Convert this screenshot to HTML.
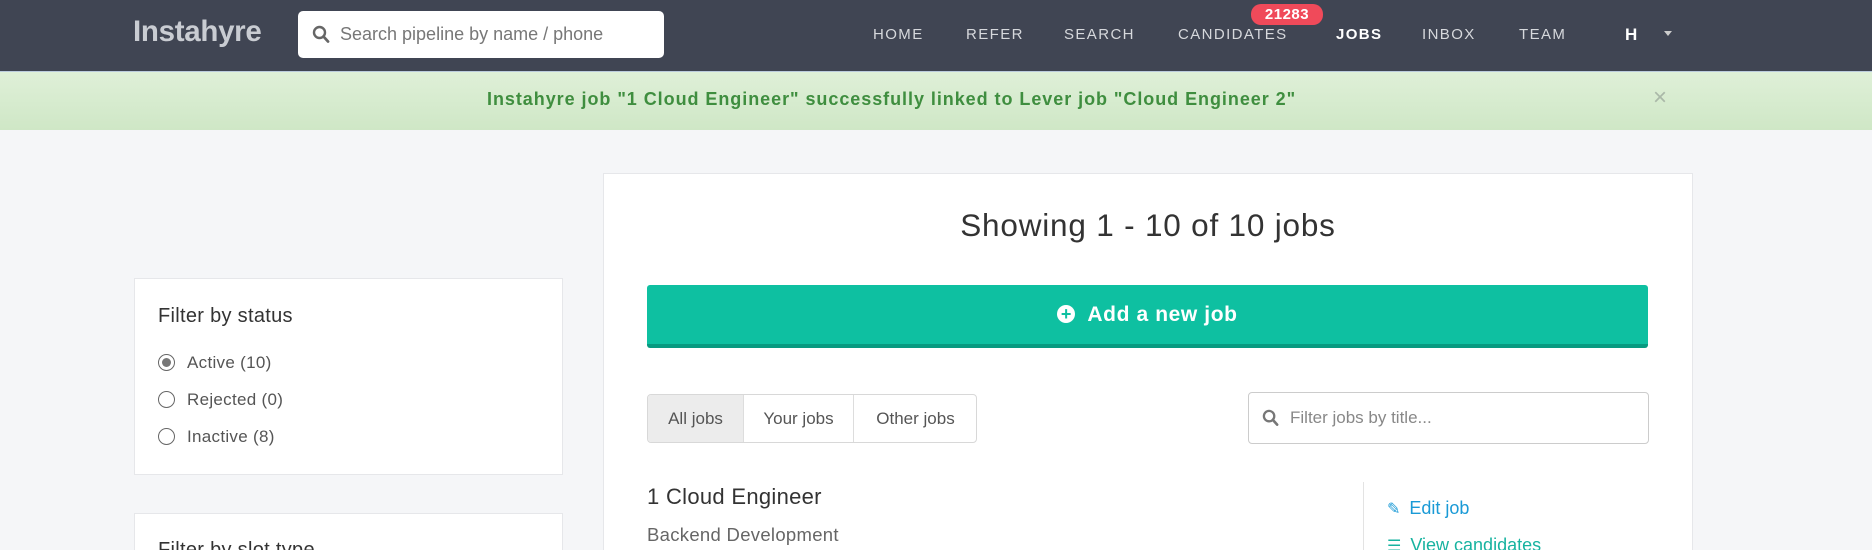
<!DOCTYPE html>
<html><head><meta charset="utf-8"><style>
*{margin:0;padding:0;box-sizing:border-box}
html,body{width:1872px;height:550px;overflow:hidden}
body{background:#f5f6f8;font-family:"Liberation Sans",sans-serif;position:relative}
.a{position:absolute;white-space:nowrap}
.nav{position:absolute;left:0;top:0;width:1872px;height:71px;background:#404553}
.ni{position:absolute;top:26px;font-size:15px;letter-spacing:1.4px;color:#d6d8dc;line-height:18px}
.banner{position:absolute;left:0;top:71px;width:1872px;height:59px;background:linear-gradient(#dff0d8,#cfe7c6);border-top:1px solid #bcd;}
.card{position:absolute;background:#fff;border:1px solid #e6e7ea}
.radio{position:absolute;width:17px;height:17px;border:1.5px solid #666;border-radius:50%;background:#fff}
.lbl{position:absolute;font-size:17px;color:#555;letter-spacing:.3px}
</style></head><body>
<div class="nav">
  <div class="a" style="left:133px;top:15px;font-size:29.5px;font-weight:bold;color:#c9ccd2;letter-spacing:-.3px">Instahyre</div>
  <div class="a" style="left:298px;top:11px;width:366px;height:47px;background:#fff;border-radius:5px">
    <svg style="position:absolute;left:14px;top:14px" width="18" height="19" viewBox="0 0 18 19"><circle cx="7.5" cy="7.5" r="5.5" fill="none" stroke="#666" stroke-width="2.4"/><path d="M11.5 11.5 L16 16.5" stroke="#666" stroke-width="2.8" stroke-linecap="round"/></svg>
    <div class="a" style="left:42px;top:13px;font-size:18px;color:#777">Search pipeline by name / phone</div>
  </div>
  <div class="ni" style="left:873px">HOME</div>
  <div class="ni" style="left:966px">REFER</div>
  <div class="ni" style="left:1064px">SEARCH</div>
  <div class="ni" style="left:1178px">CANDIDATES</div>
  <div class="a" style="left:1251px;top:4px;width:72px;height:21px;background:#f04a5a;border-radius:10px;color:#fff;font-weight:bold;font-size:15px;text-align:center;line-height:21px;letter-spacing:.5px">21283</div>
  <div class="ni" style="left:1336px;color:#fff;font-weight:bold">JOBS</div>
  <div class="ni" style="left:1422px">INBOX</div>
  <div class="ni" style="left:1519px">TEAM</div>
  <div class="ni" style="left:1625px;color:#fff;font-weight:bold;font-size:17px">H</div>
  <div class="a" style="left:1664px;top:31px;width:0;height:0;border-left:4px solid transparent;border-right:4px solid transparent;border-top:5px solid #ccc"></div>
</div>
<div class="banner">
  <div class="a" style="left:487px;top:17px;font-size:18px;font-weight:bold;color:#3f8e3f;letter-spacing:.95px">Instahyre job "1 Cloud Engineer" successfully linked to Lever job "Cloud Engineer 2"</div>
  <div class="a" style="left:1653px;top:12px;font-size:24px;color:#aab8a8">×</div>
</div>
<div class="card" style="left:134px;top:278px;width:429px;height:197px">
  <div class="a" style="left:23px;top:26px;font-size:20px;color:#333;letter-spacing:.3px">Filter by status</div>
  <div class="radio" style="left:23px;top:75px"><div style="position:absolute;left:2.5px;top:2.5px;width:9px;height:9px;border-radius:50%;background:#777"></div></div>
  <div class="lbl" style="left:52px;top:74px">Active (10)</div>
  <div class="radio" style="left:23px;top:112px"></div>
  <div class="lbl" style="left:52px;top:111px">Rejected (0)</div>
  <div class="radio" style="left:23px;top:149px"></div>
  <div class="lbl" style="left:52px;top:148px">Inactive (8)</div>
</div>
<div class="card" style="left:134px;top:513px;width:429px;height:38px;overflow:hidden;border-bottom:none">
  <div class="a" style="left:23px;top:25px;font-size:20px;color:#333;letter-spacing:.3px">Filter by slot type</div>
</div>
<div class="card" style="left:603px;top:173px;width:1090px;height:378px;overflow:hidden;border-bottom:none">
  <div class="a" style="left:0;width:1088px;top:33px;text-align:center;font-size:31.5px;color:#333;letter-spacing:.8px">Showing 1 - 10 of 10 jobs</div>
  <div class="a" style="left:43px;top:111px;width:1001px;height:63px;background:#0ec0a1;border-bottom:4px solid #079a80;border-radius:3px">
    <div class="a" style="left:0;width:1001px;top:18px;text-align:center;color:#fff;font-size:21px;font-weight:bold;letter-spacing:.6px"><span style="display:inline-block;width:18px;height:18px;border-radius:50%;background:#fff;color:#0ec0a1;font-size:18px;line-height:18px;vertical-align:1px;margin-right:12px">+</span>Add a new job</div>
  </div>
  <div class="a" style="left:43px;top:220px;width:330px;height:49px;border:1px solid #d8d8d8;border-radius:4px;overflow:hidden;font-size:17px;color:#555">
    <div class="a" style="left:0;top:0;width:95px;height:47px;background:#ececec;line-height:47px;text-align:center">All jobs</div>
    <div class="a" style="left:95px;top:0;width:110px;height:47px;border-left:1px solid #ddd;line-height:47px;text-align:center">Your jobs</div>
    <div class="a" style="left:205px;top:0;width:124px;height:47px;border-left:1px solid #ddd;line-height:47px;text-align:center">Other jobs</div>
  </div>
  <div class="a" style="left:644px;top:218px;width:401px;height:52px;border:1px solid #ccc;border-radius:4px">
    <svg style="position:absolute;left:13px;top:16px" width="17" height="18" viewBox="0 0 18 19"><circle cx="7.5" cy="7.5" r="5.5" fill="none" stroke="#777" stroke-width="2.4"/><path d="M11.5 11.5 L16 16.5" stroke="#777" stroke-width="2.8" stroke-linecap="round"/></svg>
    <div class="a" style="left:41px;top:15px;font-size:17px;color:#888">Filter jobs by title...</div>
  </div>
  <div class="a" style="left:43px;top:310px;font-size:22px;color:#333;letter-spacing:.3px">1 Cloud Engineer</div>
  <div class="a" style="left:43px;top:350px;font-size:18.5px;color:#666;letter-spacing:.3px">Backend Development</div>
  <div class="a" style="left:759px;top:308px;width:1px;height:100px;background:#e3e3e3"></div>
  <div class="a" style="left:783px;top:324px;font-size:18px;color:#1a9ad6"><span style="font-size:16px;margin-right:9px">✎</span>Edit job</div>
  <div class="a" style="left:783px;top:361px;font-size:18px;color:#17b3a0"><span style="font-size:16px;margin-right:9px">☰</span>View candidates</div>
</div>
</body></html>
